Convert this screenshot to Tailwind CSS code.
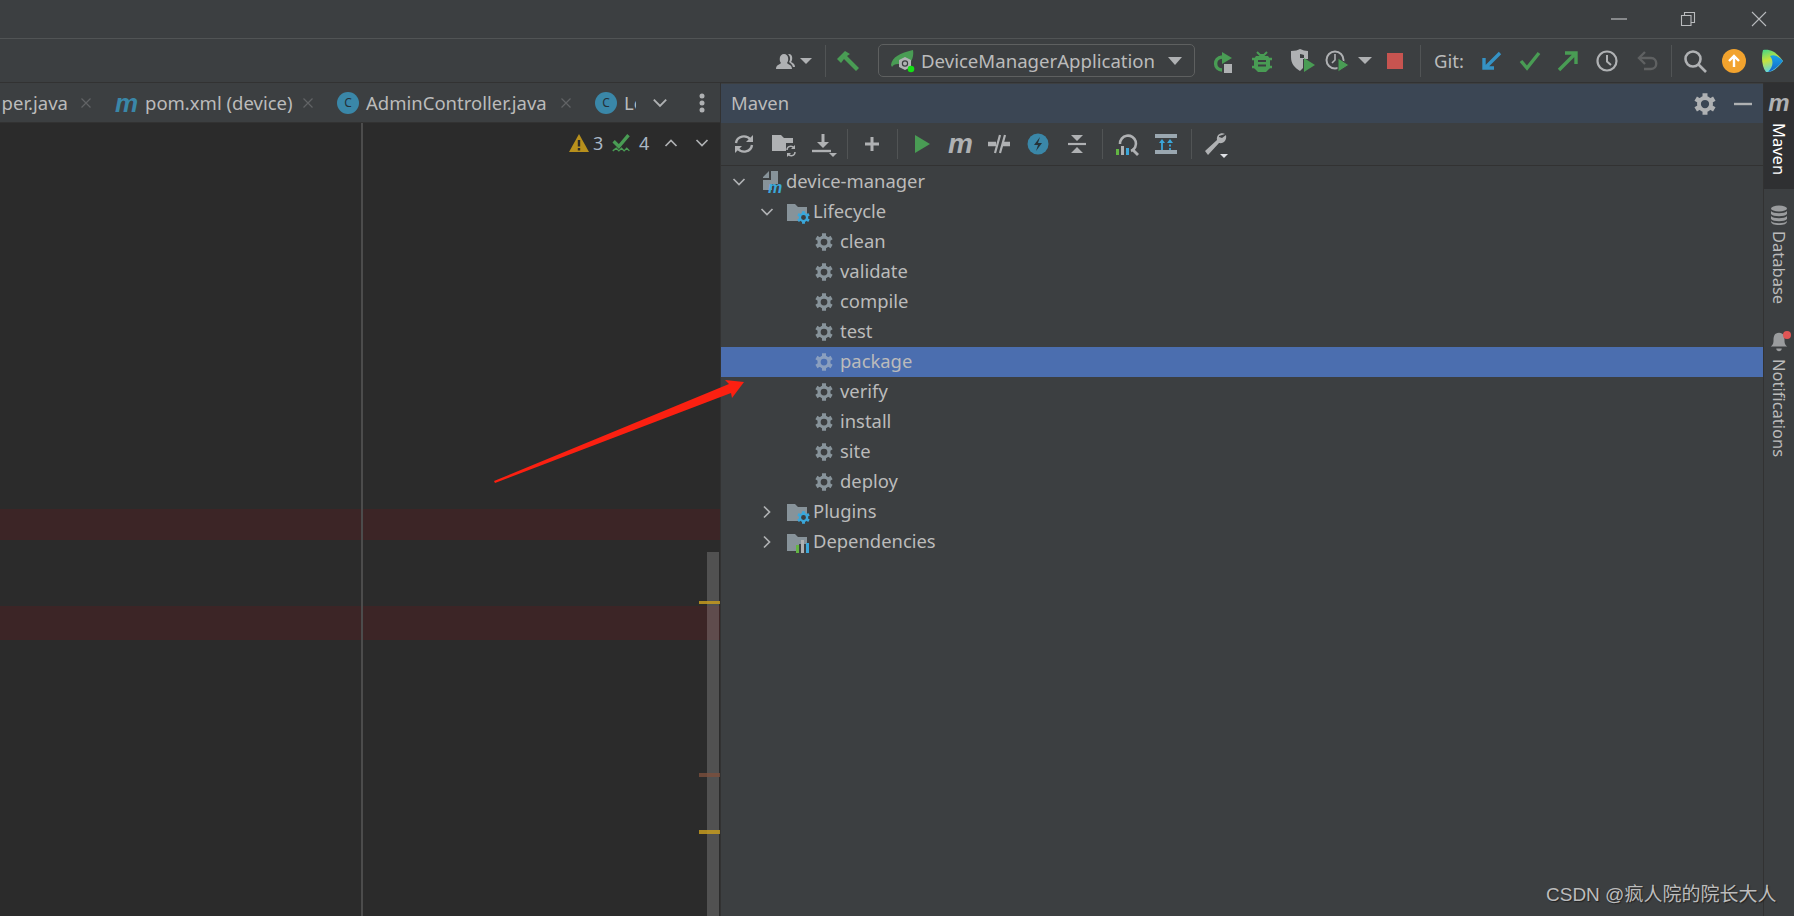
<!DOCTYPE html>
<html lang="en">

<head>
    <meta charset="UTF-8" />
    <title>device-manager - Maven</title>
    <script src="https://cdn.jsdelivr.net/npm/@tailwindcss/browser@4"></script>
</head>

<body class="bg-[#3c3f41] text-[#bbbbbb] font-['Noto_Sans',sans-serif]">

    <!-- shared icons -->
    <svg class="hidden">
        <symbol id="gear" viewBox="0 0 16 16">
            <g transform="translate(8 8)" fill="none" stroke="currentColor">
                <circle r="4.4" stroke-width="2.8" />
                <path stroke-width="3.6" d="M0-5V-7.800M0 5V7.800" />
                <path stroke-width="3.6" d="M0-5V-7.800M0 5V7.800" transform="rotate(60)" />
                <path stroke-width="3.6" d="M0-5V-7.800M0 5V7.800" transform="rotate(120)" />
            </g>
        </symbol>
        <symbol id="close" viewBox="0 0 12 12">
            <path d="M1.5 1.5l9 9M10.5 1.5l-9 9" stroke="currentColor" stroke-width="1.2" fill="none" />
        </symbol>
        <symbol id="chev-down" viewBox="0 0 16 16">
            <path d="M2.5 5l5.5 5.5L13.5 5" stroke="currentColor" stroke-width="1.7" fill="none" />
        </symbol>
        <symbol id="chev-right" viewBox="0 0 16 16">
            <path d="M5 2.5l5.5 5.5L5 13.5" stroke="currentColor" stroke-width="1.7" fill="none" />
        </symbol>
        <symbol id="folder" viewBox="0 0 22 22">
            <path d="M1 3h8l3 3h9v7h-8v7H1z" fill="#87939a" />
        </symbol>
        <symbol id="blue-gear" viewBox="0 0 16 16">
            <g transform="translate(8 8)" fill="none" stroke="#3ba8db">
                <circle r="4.4" stroke-width="2.8" />
                <path stroke-width="3.6" d="M0-5V-7.800M0 5V7.800" />
                <path stroke-width="3.6" d="M0-5V-7.800M0 5V7.800" transform="rotate(60)" />
                <path stroke-width="3.6" d="M0-5V-7.800M0 5V7.800" transform="rotate(120)" />
            </g>
        </symbol>
    </svg>

    <div class="relative w-[1794px] h-[916px] overflow-hidden flex flex-col">

        <!-- Title bar -->
        <div class="h-[39px] shrink-0 flex items-center border-b border-[#515455] text-[#b9bbbd]">
            <svg class="w-[16px] h-[16px] ml-[1611px]" viewBox="0 0 16 16"><path d="M0 8h16" stroke="currentColor" stroke-width="1.2" /></svg>
            <svg class="w-[16px] h-[16px] ml-[53px]" viewBox="0 0 16 16" fill="none" stroke="currentColor" stroke-width="1.1"><path d="M1.5 4.5h9.5v10h-9.5z" /><path d="M4.5 4.5v-3h10v10h-3.5" /></svg>
            <svg class="w-[16px] h-[16px] ml-[55px]" viewBox="0 0 16 16"><path d="M1 1l14 14M15 1L1 15" stroke="currentColor" stroke-width="1.1" /></svg>
        </div>

        <!-- Main toolbar -->
        <div class="h-[44px] shrink-0 flex items-center pl-[773px] border-b border-[#323232]">
            <svg class="w-6 h-6" viewBox="0 0 24 24" fill="#afb1b3"><path d="M3 20c0-4 3-4 5-6-2-2-2-9 3-9s5 7 3 9c2 2 5 2 5 6z" /><path d="M15 5c5-1 5 6 3 8 2 1 4 2 4 5h-2c-1-3-3-4-4-5 2-3 1-6-1-8z" /></svg>
            <svg class="w-[18px] h-[8px]" viewBox="0 0 18 8"><path d="M3 1h12l-6 6z" fill="#afb1b3" /></svg>
            <div class="ml-[10px] w-px h-[32px] bg-[#515455]"></div>
            <svg class="ml-[10px] w-6 h-6" viewBox="0 0 24 24"><path d="M1 10l8-8 5 3-3 2 12 12-3 3L8 10l-3 4z" fill="#499c54" /></svg>

            <div class="ml-[18px] w-[317px] h-[33px] flex items-center border border-[#5e6060] rounded-[5px] pl-[12px]">
                <svg class="w-[28px] h-[26px] -ml-px" viewBox="0 0 28 26">
                    <path d="M1 17C2 9 10 5 23 2c1 6-1 11-4 14H8c-3 0-5 1-6 3z" fill="#499c54" />
                    <path d="M15 9l6 3v7l-6 3-6-3v-7z" fill="#afb1b3" />
                    <circle cx="15" cy="15.500" r="2.600" fill="none" stroke="#3c3f41" stroke-width="1.200" />
                    <circle cx="21" cy="21" r="3.300" fill="#14e014" />
                </svg>
                <span class="ml-[3px] w-[235px] text-[18.6px] whitespace-nowrap">DeviceManagerApplication</span>
                <svg class="ml-[12px] w-[14px] h-[8px]" viewBox="0 0 14 8"><path d="M0 0h14l-7 8z" fill="#afb1b3" /></svg>
            </div>

            <svg class="ml-[16px] w-6 h-6" viewBox="0 0 24 24">
                <path d="M11 21C3 21 2 9 11 8" fill="none" stroke="#499c54" stroke-width="3.400" />
                <path d="M11 3l10 6-10 6z" fill="#499c54" />
                <path d="M13 15h8v9h-8z" fill="#afb1b3" />
            </svg>
            <svg class="ml-[15px] w-6 h-6" viewBox="0 0 24 24">
                <path d="M7 3l3 3h4l3-3" fill="none" stroke="#499c54" stroke-width="2" />
                <path d="M6 7h12l2 3v9l-4 4H8l-4-4v-9z" fill="#499c54" />
                <path d="M2 10h20M2 18h20" stroke="#499c54" stroke-width="2.400" />
                <path d="M8 12h8M8 16.500h8" stroke="#3c3f41" stroke-width="2" />
            </svg>
            <svg class="ml-[16px] w-6 h-6 overflow-visible" viewBox="0 0 24 24">
                <path d="M1 2c4 0 7-1 9-2 3 1 5 2 8 2v8h-5v9l-3 3c-5-3-9-7-9-14z" fill="#afb1b3" />
                <path d="M10 5c2 0 3 1 4 1v3h-4z" fill="#3c3f41" />
                <path d="M14 9l11 7-11 7z" fill="#499c54" />
            </svg>
            <svg class="ml-[11px] w-6 h-6 overflow-visible" viewBox="0 0 24 24">
                <circle cx="10" cy="11" r="8.500" fill="none" stroke="#afb1b3" stroke-width="2" />
                <path d="M10 5v6l-3 3" fill="none" stroke="#afb1b3" stroke-width="1.600" />
                <path d="M13 9l11 7-11 7z" fill="#499c54" stroke="#3c3f41" stroke-width="1" />
            </svg>
            <svg class="ml-[9px] w-[14px] h-[8px]" viewBox="0 0 14 8"><path d="M0 0h14l-7 7z" fill="#afb1b3" /></svg>
            <div class="ml-[15px] w-[16px] h-[16px] bg-[#c75450]"></div>
            <div class="ml-[17px] w-px h-[32px] bg-[#515455]"></div>
            <span class="ml-[13px] w-[30px] text-[18.5px]">Git:</span>
            <svg class="ml-[15px] w-6 h-6" viewBox="0 0 24 24"><path d="M21 4L7 18M5 9v10h10" fill="none" stroke="#3592c4" stroke-width="3.400" /></svg>
            <svg class="ml-[15px] w-6 h-6" viewBox="0 0 24 24"><path d="M3 12l6 7L21 4" fill="none" stroke="#499c54" stroke-width="3.400" /></svg>
            <svg class="ml-[14px] w-6 h-6" viewBox="0 0 24 24"><path d="M3 21L19 5M9 4h11v11" fill="none" stroke="#499c54" stroke-width="3.400" /></svg>
            <svg class="ml-[15px] w-6 h-6" viewBox="0 0 24 24" fill="none" stroke="#afb1b3"><circle cx="12" cy="12" r="9.500" stroke-width="2.200" /><path d="M12 6v6.500l4 3.500" stroke-width="2" /></svg>
            <svg class="ml-[16px] w-6 h-6" viewBox="0 0 24 24" fill="none" stroke="#5f6162" stroke-width="2.400"><path d="M5 9h11c7 0 7 11 0 11H9" /><path d="M10 3L4 9l6 6" /></svg>
            <div class="ml-[12px] w-px h-[32px] bg-[#515455]"></div>
            <svg class="ml-[11px] w-6 h-6" viewBox="0 0 24 24" fill="none" stroke="#afb1b3" stroke-width="2.600"><circle cx="10" cy="10" r="7.500" /><path d="M15.500 15.500L23 23" /></svg>
            <div class="ml-[15px] w-6 h-6 rounded-full bg-[#f2a32e] flex items-center justify-center">
                <svg class="w-[14px] h-[14px]" viewBox="0 0 14 14"><path d="M7 13V3M2 7l5-5 5 5" fill="none" stroke="#ffffff" stroke-width="2.400" /></svg>
            </div>
            <svg class="ml-[15px] w-6 h-6" viewBox="0 0 24 24">
                <defs>
                    <linearGradient id="logoLeft" x1="0" y1="0" x2="0.300" y2="1">
                        <stop offset="0" stop-color="#3fd68a" />
                        <stop offset="0.500" stop-color="#c8e23c" />
                        <stop offset="1" stop-color="#5fd4e0" />
                    </linearGradient>
                    <linearGradient id="logoRight" x1="0" y1="0" x2="0" y2="1">
                        <stop offset="0" stop-color="#19a5e8" />
                        <stop offset="1" stop-color="#1463c8" />
                    </linearGradient>
                </defs>
                <path d="M2 1c8-1 13 2 20 11-6 8-11 11-17 11C1 18 0 8 2 1z" fill="url(#logoLeft)" />
                <path d="M9 7c5-2 9 1 13 5-5 6-10 10-15 11 5-5 6-11 2-16z" fill="url(#logoRight)" />
            </svg>
        </div>

        <!-- Content -->
        <div class="flex-1 flex min-h-0">

            <!-- Editor side -->
            <div class="w-[721px] shrink-0 flex flex-col border-r border-[#323232]">
                <div class="h-[39px] shrink-0 flex items-center text-[18.5px] whitespace-nowrap">
                    <span class="w-[68px] text-right overflow-hidden">per.java</span>
                    <span class="w-[36px] flex justify-center text-[#616365]"><svg class="w-[12px] h-[12px]"><use href="#close" /></svg></span>
                    <span class="ml-[11px] w-[22px] text-[#3a87a8] text-[26px] leading-none font-bold italic font-['Liberation_Sans',sans-serif]">m</span>
                    <span class="ml-[8px] w-[145px]">pom.xml (device)</span>
                    <span class="w-[36px] flex justify-center text-[#616365]"><svg class="w-[12px] h-[12px]"><use href="#close" /></svg></span>
                    <span class="ml-[11px] w-[22px] h-[22px] rounded-full bg-[#3a87a8] text-[#243038] text-[12px] flex items-center justify-center">C</span>
                    <span class="ml-[7px] w-[181px]">AdminController.java</span>
                    <span class="w-[38px] flex justify-center text-[#616365]"><svg class="w-[12px] h-[12px]"><use href="#close" /></svg></span>
                    <span class="ml-[10px] w-[22px] h-[22px] rounded-full bg-[#3a87a8] text-[#243038] text-[12px] flex items-center justify-center">C</span>
                    <span class="ml-[7px] w-[12px] overflow-hidden">Lo</span>
                    <span class="w-[48px] flex justify-center text-[#afb1b3]"><svg class="w-[18px] h-[18px]"><use href="#chev-down" /></svg></span>
                    <span class="w-[36px] flex justify-center">
                        <svg class="w-[6px] h-[20px]" viewBox="0 0 6 20" fill="#afb1b3"><circle cx="3" cy="3" r="2.500" /><circle cx="3" cy="10" r="2.500" /><circle cx="3" cy="17" r="2.500" /></svg>
                    </span>
                </div>

                <div class="relative flex-1 bg-[#2b2b2b] border-t border-[#323232]">
                    <div class="absolute top-0 bottom-0 left-[361px] w-[2px] bg-[#4c4c4c]"></div>

                    <div class="h-[40px] flex items-center text-[18px] text-[#a9b7c6] whitespace-nowrap">
                        <svg class="ml-[568px] w-[22px] h-[20px]" viewBox="0 0 22 20"><path d="M11 1l10 18H1z" fill="#b8901c" /><path d="M9.800 7h2.400v6.500H9.800zM9.800 15h2.400v2.400H9.800z" fill="#2b2b2b" /></svg>
                        <span class="ml-[3px] w-[13px]">3</span>
                        <svg class="ml-[5px] w-[21px] h-[22px]" viewBox="0 0 24 24" fill="none" stroke="#499c54"><path d="M3 10l6 6L20 3" stroke-width="3.800" /><path d="M2 21l4-3 3 3 3-3 3 3 3-3 3 3" stroke-width="1.600" /></svg>
                        <span class="ml-[7px] w-[13px]">4</span>
                        <svg class="ml-[11px] w-[16px] h-[16px] text-[#afb1b3] rotate-180"><use href="#chev-down" /></svg>
                        <svg class="ml-[15px] w-[16px] h-[16px] text-[#afb1b3]"><use href="#chev-down" /></svg>
                    </div>

                    <!-- highlighted lines -->
                    <div class="mt-[346px] h-[31px] bg-[#3c2526]"></div>
                    <div class="mt-[66px] h-[34px] bg-[#3c2526]"></div>

                    <!-- error stripe -->
                    <div class="absolute top-[429px] bottom-0 left-[707px] w-[12px] bg-[#ffffff]/18"></div>
                    <div class="absolute top-[478px] left-[699px] w-[21px] h-[3px] bg-[#c49a1e]/85"></div>
                    <div class="absolute top-[650px] left-[699px] w-[21px] h-[4px] bg-[#7c4f3c]/80"></div>
                    <div class="absolute top-[707px] left-[699px] w-[21px] h-[4px] bg-[#c49a1e]/85"></div>
                </div>
            </div>

            <!-- Maven tool window -->
            <div class="flex-1 flex flex-col min-w-0 text-[18.4px] pt-px">
                <div class="h-[39px] shrink-0 flex items-center bg-[#3b4654] pl-[10px]">
                    <span class="text-[#bbbbbb] -translate-y-px">Maven</span>
                    <svg class="ml-auto w-[22px] h-[22px] text-[#afb1b3]"><use href="#gear" /></svg>
                    <svg class="ml-[18px] mr-[11px] w-[18px] h-[18px]" viewBox="0 0 18 18"><path d="M0 9h18" stroke="#afb1b3" stroke-width="2.400" /></svg>
                </div>

                <div class="h-[43px] shrink-0 flex items-center pl-[11px] border-b border-[#323232]">
                    <svg class="w-6 h-6" viewBox="0 0 24 24" fill="none" stroke="#afb1b3" stroke-width="2.400">
                        <path d="M4 11c1-7 10-9 15-3" /><path d="M20 13c-1 7-10 9-15 3" />
                        <path d="M21 3v7h-7z" fill="#afb1b3" stroke="none" /><path d="M3 21v-7h7z" fill="#afb1b3" stroke="none" />
                    </svg>
                    <svg class="ml-[15px] w-6 h-6 overflow-visible" viewBox="0 0 24 24">
                        <path d="M1 3h9l3 3h9v5h-7v8H1z" fill="#afb1b3" />
                        <path d="M16 18c0-4 5-5 7-2M24 20c0 4-5 5-7 2" fill="none" stroke="#afb1b3" stroke-width="1.500" />
                        <path d="M24 13v4h-4zM16 25v-4h4z" fill="#afb1b3" />
                    </svg>
                    <svg class="ml-[16px] w-6 h-6 overflow-visible" viewBox="0 0 24 24">
                        <path d="M12 2v10" stroke="#afb1b3" stroke-width="3" />
                        <path d="M6 10h12l-6 6z" fill="#afb1b3" />
                        <path d="M1 19h19" stroke="#afb1b3" stroke-width="2.400" />
                        <path d="M18 21h8l-4 4z" fill="#afb1b3" />
                    </svg>
                    <div class="ml-[12px] w-px h-[30px] bg-[#515455]"></div>
                    <svg class="ml-[12px] w-6 h-6" viewBox="0 0 24 24"><path d="M12 5v14M5 12h14" stroke="#afb1b3" stroke-width="3" /></svg>
                    <div class="ml-[13px] w-px h-[30px] bg-[#515455]"></div>
                    <svg class="ml-[12px] w-6 h-6" viewBox="0 0 24 24"><path d="M5 3l15 9-15 9z" fill="#499c54" /></svg>
                    <span class="ml-[14px] w-6 text-center text-[#afb1b3] text-[28px] leading-none font-bold italic font-['Liberation_Sans',sans-serif]">m</span>
                    <svg class="ml-[15px] w-6 h-6" viewBox="0 0 24 24" fill="none" stroke="#afb1b3"><path d="M1 12h8M16 12h7" stroke-width="4.500" /><path d="M13 3L8 21M18 3l-5 18" stroke-width="2.200" /></svg>
                    <svg class="ml-[15px] w-6 h-6" viewBox="0 0 24 24"><circle cx="12" cy="12" r="10.500" fill="#3a87a8" /><path d="M14 5l-6 8h4l-2 6 6-8h-4z" fill="#263238" /></svg>
                    <svg class="ml-[15px] w-6 h-6" viewBox="0 0 24 24"><path d="M3 12h18" stroke="#afb1b3" stroke-width="2.200" /><path d="M6 3h12l-6 6zM6 21h12l-6-6z" fill="#afb1b3" /></svg>
                    <div class="ml-[13px] w-px h-[30px] bg-[#515455]"></div>
                    <svg class="ml-[12px] w-6 h-6" viewBox="0 0 24 24">
                        <path d="M5 12a8 8 0 1 1 11 7" fill="none" stroke="#afb1b3" stroke-width="2.600" />
                        <path d="M17 17l6 6" stroke="#afb1b3" stroke-width="2.800" />
                        <path d="M1 17h3v6H1z" fill="#62b543" /><path d="M6 14h3v9H6z" fill="#afb1b3" /><path d="M11 16h3v7h-3z" fill="#3ba8db" />
                    </svg>
                    <svg class="ml-[15px] w-6 h-6" viewBox="0 0 24 24">
                        <path d="M1 2h22v4H1zM1 18h22v4H1z" fill="#9aa7b0" />
                        <path d="M8 18V10" stroke="#3ba8db" stroke-width="1.800" />
                        <path d="M16 18V10" stroke="#3ba8db" stroke-width="1.800" stroke-dasharray="2 1.500" />
                        <path d="M5 11l3-4 3 4zM13 11l3-4 3 4z" fill="#3ba8db" />
                    </svg>
                    <div class="ml-[13px] w-px h-[30px] bg-[#515455]"></div>
                    <svg class="ml-[11px] w-6 h-6 overflow-visible" viewBox="0 0 24 24">
                        <path d="M22 2c-4-2-9 1-8 6L2 19l3 4 11-12c5 1 8-3 7-8l-4 3-3-1V4z" fill="#afb1b3" />
                        <path d="M17 22h8l-4 4z" fill="#dfe1e5" />
                    </svg>
                </div>

                <!-- Tree -->
                <div class="pt-px [&>div>span]:-translate-y-px">
                    <div class="h-[30px] flex items-center">
                        <svg class="ml-[10px] w-4 h-4 text-[#afb1b3]"><use href="#chev-down" /></svg>
                        <div class="relative ml-[14px] w-[22px] h-[24px]">
                            <svg class="w-[22px] h-[24px]" viewBox="0 0 22 24"><path d="M2 7l6-6v7H2zM10 1h7v13h-6v6H2V10h8z" fill="#87939a" /></svg>
                            <span class="absolute left-[7px] top-[10px] text-[#3ba8db] text-[16px] leading-none font-bold italic font-['Liberation_Sans',sans-serif]">m</span>
                        </div>
                        <span class="ml-[3px]">device-manager</span>
                    </div>
                    <div class="h-[30px] flex items-center">
                        <svg class="ml-[38px] w-4 h-4 text-[#afb1b3]"><use href="#chev-down" /></svg>
                        <div class="relative ml-[11px] w-[22px] h-[22px]">
                            <svg class="w-[22px] h-[22px]"><use href="#folder" /></svg>
                            <svg class="absolute left-[11px] top-[10px] w-[13px] h-[13px]"><use href="#blue-gear" /></svg>
                        </div>
                        <span class="ml-[5px]">Lifecycle</span>
                    </div>
                    <div class="h-[30px] flex items-center pl-[94px]"><svg class="w-[18px] h-[18px] text-[#87939a]"><use href="#gear" /></svg><span class="ml-[7px]">clean</span></div>
                    <div class="h-[30px] flex items-center pl-[94px]"><svg class="w-[18px] h-[18px] text-[#87939a]"><use href="#gear" /></svg><span class="ml-[7px]">validate</span></div>
                    <div class="h-[30px] flex items-center pl-[94px]"><svg class="w-[18px] h-[18px] text-[#87939a]"><use href="#gear" /></svg><span class="ml-[7px]">compile</span></div>
                    <div class="h-[30px] flex items-center pl-[94px]"><svg class="w-[18px] h-[18px] text-[#87939a]"><use href="#gear" /></svg><span class="ml-[7px]">test</span></div>
                    <div class="h-[30px] flex items-center pl-[94px] bg-[#4b6eaf]"><svg class="w-[18px] h-[18px] text-[#8a9fbf]"><use href="#gear" /></svg><span class="ml-[7px]">package</span></div>
                    <div class="h-[30px] flex items-center pl-[94px]"><svg class="w-[18px] h-[18px] text-[#87939a]"><use href="#gear" /></svg><span class="ml-[7px]">verify</span></div>
                    <div class="h-[30px] flex items-center pl-[94px]"><svg class="w-[18px] h-[18px] text-[#87939a]"><use href="#gear" /></svg><span class="ml-[7px]">install</span></div>
                    <div class="h-[30px] flex items-center pl-[94px]"><svg class="w-[18px] h-[18px] text-[#87939a]"><use href="#gear" /></svg><span class="ml-[7px]">site</span></div>
                    <div class="h-[30px] flex items-center pl-[94px]"><svg class="w-[18px] h-[18px] text-[#87939a]"><use href="#gear" /></svg><span class="ml-[7px]">deploy</span></div>
                    <div class="h-[30px] flex items-center">
                        <svg class="ml-[38px] w-4 h-4 text-[#afb1b3]"><use href="#chev-right" /></svg>
                        <div class="relative ml-[11px] w-[22px] h-[22px]">
                            <svg class="w-[22px] h-[22px]"><use href="#folder" /></svg>
                            <svg class="absolute left-[11px] top-[10px] w-[13px] h-[13px]"><use href="#blue-gear" /></svg>
                        </div>
                        <span class="ml-[5px]">Plugins</span>
                    </div>
                    <div class="h-[30px] flex items-center">
                        <svg class="ml-[38px] w-4 h-4 text-[#afb1b3]"><use href="#chev-right" /></svg>
                        <div class="relative ml-[11px] w-[22px] h-[22px]">
                            <svg class="w-[22px] h-[22px]"><use href="#folder" /></svg>
                            <svg class="absolute left-[10px] top-[8px] w-[13px] h-[14px]" viewBox="0 0 13 14"><path d="M0 6h3v8H0z" fill="#62b543" /><path d="M5 1h3v13H5z" fill="#afb1b3" /><path d="M10 4h3v10h-3z" fill="#3ba8db" /></svg>
                        </div>
                        <span class="ml-[5px]">Dependencies</span>
                    </div>
                </div>
            </div>

            <!-- Right tool strip -->
            <div class="w-[31px] shrink-0 flex flex-col items-center border-l border-[#323232] text-[16.5px]">
                <div class="h-[106px] w-full bg-[#2f3032] flex flex-col items-center">
                    <span class="mt-[8px] text-[#afb1b3] text-[24px] leading-none font-bold italic font-['Liberation_Sans',sans-serif]">m</span>
                    <span class="mt-[8px] text-white leading-none [writing-mode:vertical-rl]">Maven</span>
                </div>
                <svg class="mt-[16px] w-[18px] h-[20px]" viewBox="0 0 18 20" fill="#9a9c9e"><ellipse cx="9" cy="3.500" rx="8" ry="3" /><path d="M1 6c2 3 14 3 16 0v3c-2 3-14 3-16 0zM1 11c2 3 14 3 16 0v3c-2 3-14 3-16 0zM1 16c2 3 14 3 16 0c0 3-3 4-8 4s-8-1-8-4z" /></svg>
                <span class="mt-[6px] leading-none [writing-mode:vertical-rl]">Database</span>
                <div class="relative mt-[27px] w-[20px] h-[22px]">
                    <svg class="w-[20px] h-[22px]" viewBox="0 0 20 24" fill="#9a9c9e"><path d="M10 2c5 0 6 4 6 8 0 4 1 5 3 7H1c2-2 3-3 3-7 0-4 1-8 6-8z" /><path d="M7 19h6c0 4-6 4-6 0z" /></svg>
                    <span class="absolute -right-[2px] top-0 w-[8px] h-[8px] rounded-full bg-[#e05555]"></span>
                </div>
                <span class="mt-[6px] leading-none [writing-mode:vertical-rl]">Notifications</span>
            </div>
        </div>

        <!-- annotation arrow -->
        <svg class="absolute left-[480px] top-[370px] w-[280px] h-[130px]" viewBox="480 370 280 130">
            <path d="M494 481L729 384 725 380 744 382 732 398 731 393 495 483z" fill="#fb2011" />
        </svg>

        <!-- watermark -->
        <div class="absolute left-[1546px] top-[880px] text-[19px] leading-[30px] text-[#bcbcbc] whitespace-nowrap [text-shadow:1px_1px_1px_#222222] font-['Liberation_Sans','Noto_Sans_CJK_SC',sans-serif]">CSDN @疯人院的院长大人</div>
    </div>

</body>

</html>
